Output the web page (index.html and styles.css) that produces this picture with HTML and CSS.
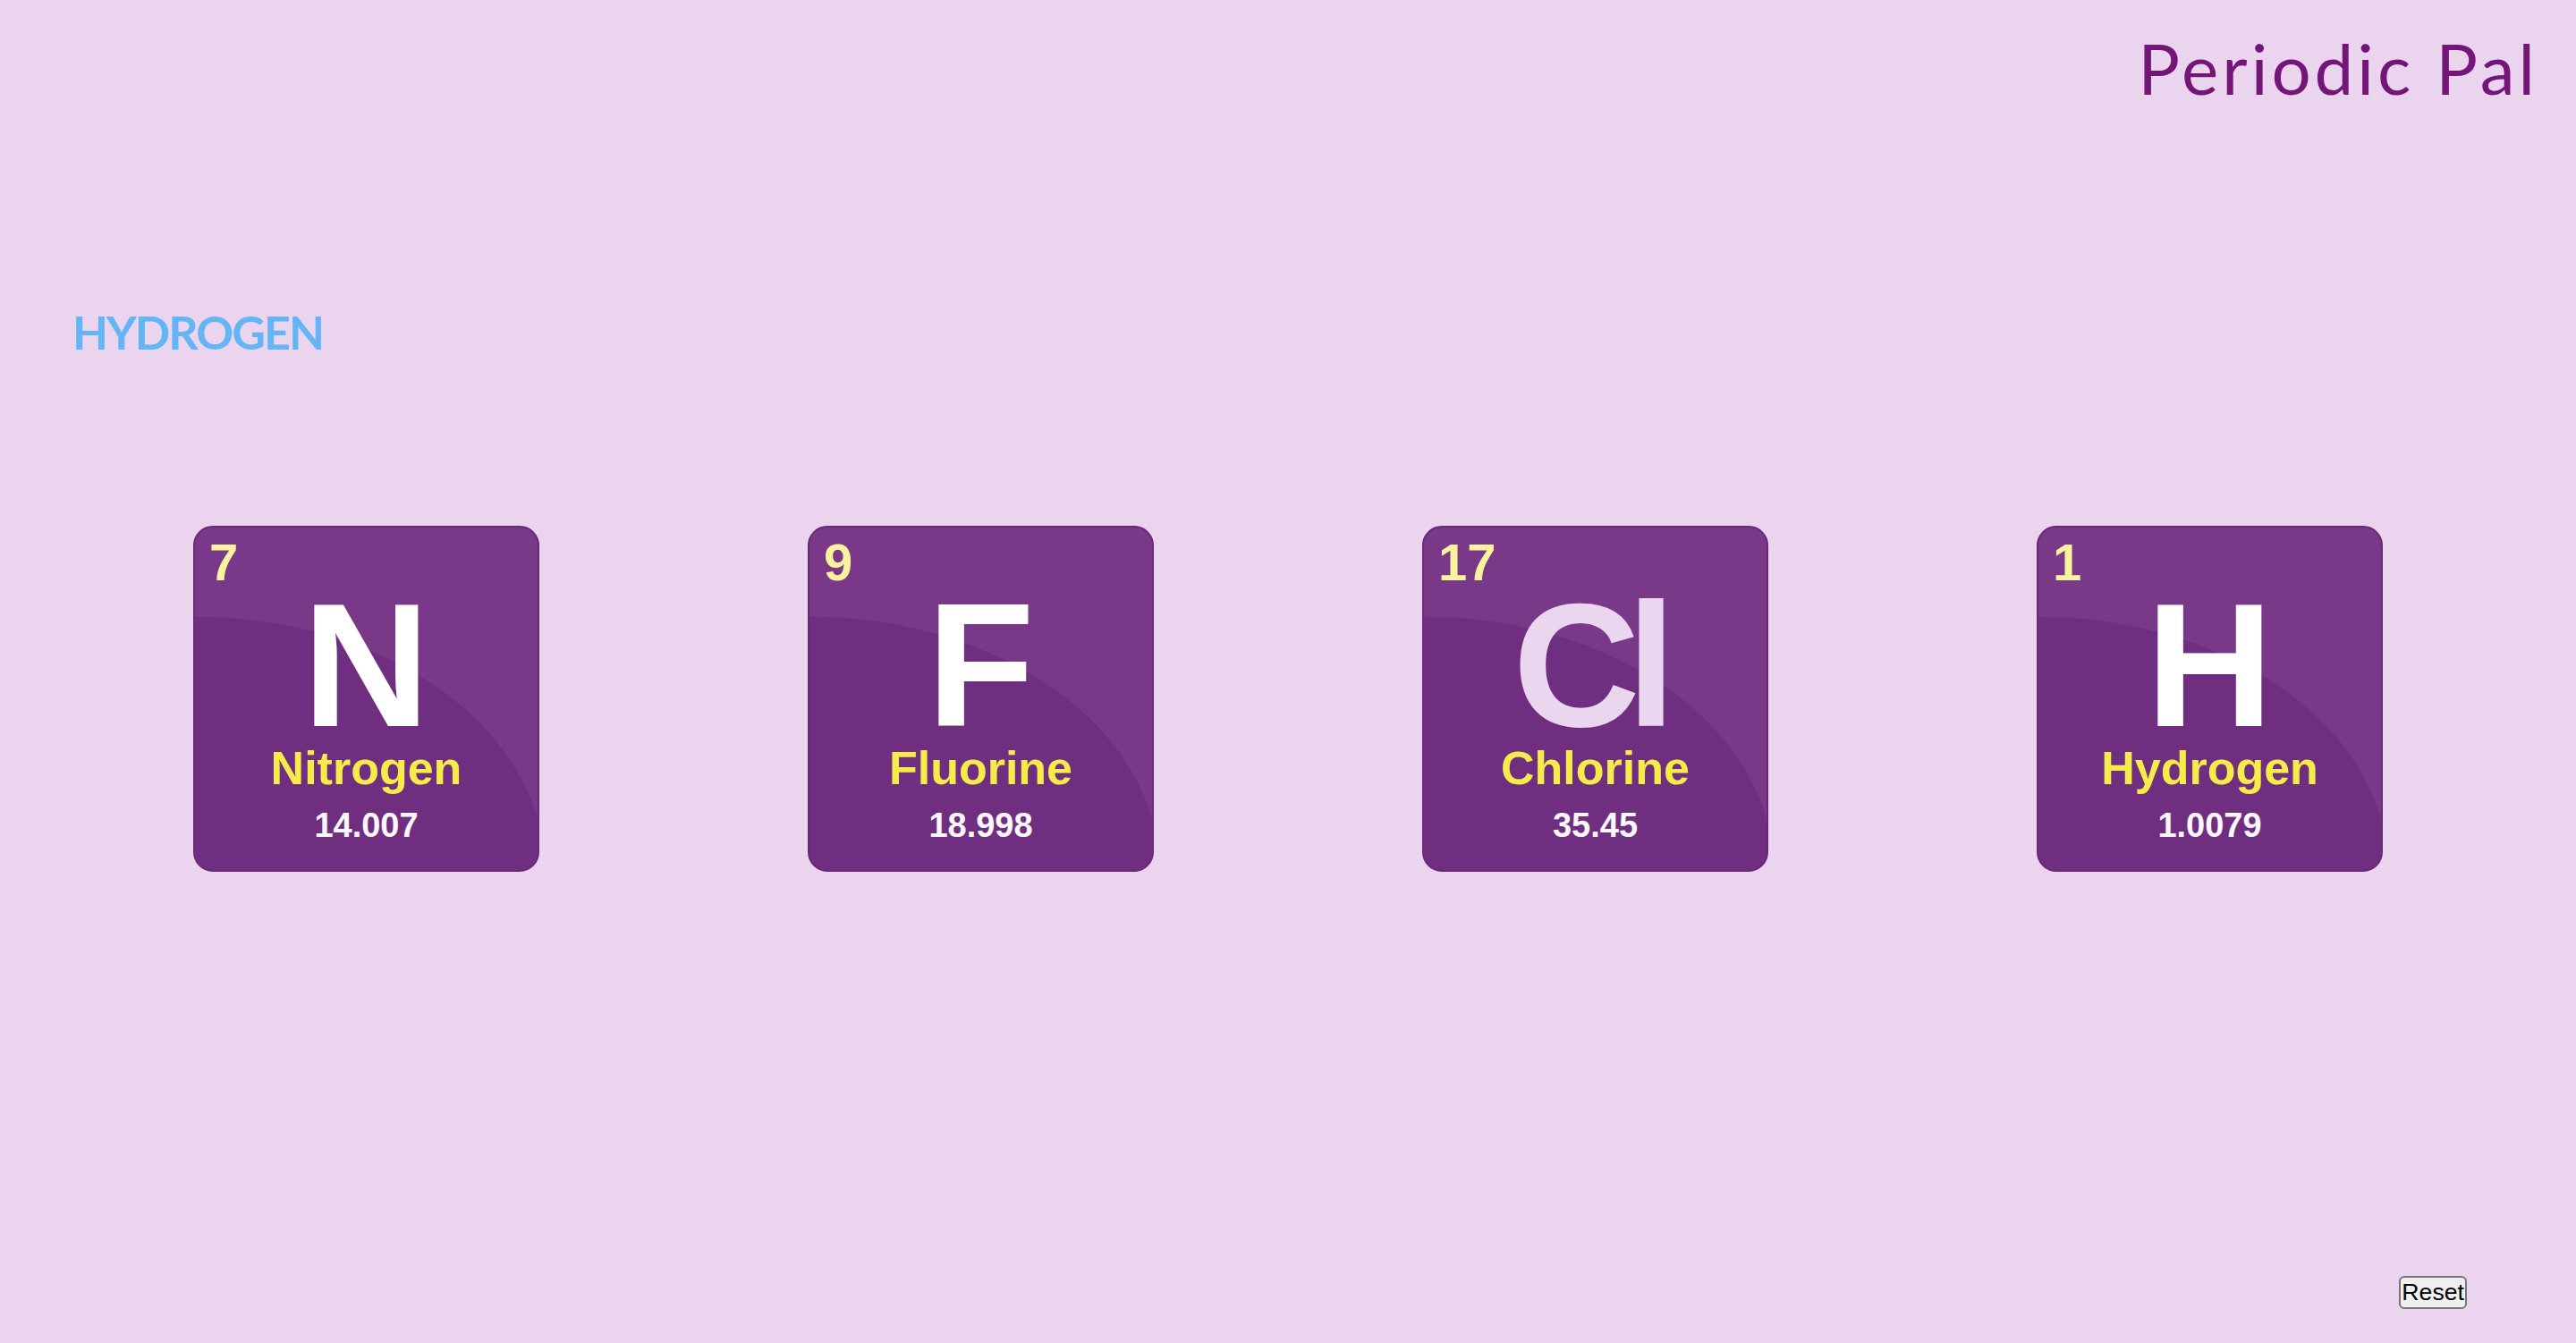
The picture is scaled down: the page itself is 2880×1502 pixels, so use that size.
FILE: index.html
```html
<!DOCTYPE html>
<html lang="en">
<head>
    <meta charset="UTF-8">
    <meta name="viewport" content="width=device-width, initial-scale=1.0">
    <title>Periodic Pal</title>
    <link rel="stylesheet" href="styles.css">
</head>
<body>

<header class="top-bar">
    <h1 class="app-title">Periodic Pal</h1>
</header>

<h2 class="target-name">HYDROGEN</h2>

<div class="element-row">
    <div class="element">
        <div class="element-number">7</div>
        <div class="element-symbol">N</div>
        <div class="element-name">Nitrogen</div>
        <div class="element-weight">14.007</div>
    </div>
    <div class="element">
        <div class="element-number">9</div>
        <div class="element-symbol">F</div>
        <div class="element-name">Fluorine</div>
        <div class="element-weight">18.998</div>
    </div>
    <div class="element">
        <div class="element-number">17</div>
        <div class="element-symbol faded">Cl</div>
        <div class="element-name">Chlorine</div>
        <div class="element-weight">35.45</div>
    </div>
    <div class="element">
        <div class="element-number">1</div>
        <div class="element-symbol">H</div>
        <div class="element-name">Hydrogen</div>
        <div class="element-weight">1.0079</div>
    </div>
</div>

<div class="controls">
    <button class="reset">Reset</button>
</div>

</body>
</html>
```

FILE: styles.css
```css
* {
    box-sizing: border-box;
    margin: 0;
    padding: 0;
}

body, html {
    height: 100%;
    overflow: hidden;
}

body {
    background: #ebd5ee;
    font-family: "Liberation Sans", Arial, sans-serif;
}

.top-bar {
    display: flex;
    justify-content: flex-end;
    padding: 30px 42px 0 0;
}

.app-title {
    font-family: Lato, sans-serif;
    font-weight: 400;
    font-size: 78px;
    line-height: 1.2;
    letter-spacing: 4px;
    color: #741578;
}

.target-name {
    margin-top: 216px;
    padding-left: 81px;
    font-family: Lato, sans-serif;
    font-weight: 700;
    font-size: 52px;
    line-height: 1.2;
    letter-spacing: -2px;
    color: #64b5f6;
}

.element-row {
    display: flex;
    justify-content: center;
    gap: 300px;
    margin-top: 186px;
}

/* one tile of the table */
.element {
    width: 387px;
    height: 387px;
    display: flex;
    flex-direction: column;
    align-items: center;
    padding-top: 18px;
    border: 2px solid #6a2878;
    border-radius: 22px;
    background: radial-gradient(392px 284px at 0 100%, #702e80 99.5%, #7a3888 100%);
    font-weight: 700;
}

.element-number {
    align-self: flex-start;
    padding-left: 16px;
    font-size: 58px;
    line-height: 0.74;
    color: #f8f39c;
}

.element-symbol {
    margin-top: 21px;
    font-size: 197px;
    line-height: 0.74;
    color: #ffffff;
}

.element-symbol.faded {
    color: #ead6ef;
    letter-spacing: -15px;
    padding-right: 17px;
}

.element-name {
    margin-top: 15px;
    font-size: 52px;
    line-height: 1;
    color: #f5ec4a;
}

.element-weight {
    margin-top: 19px;
    font-size: 38px;
    line-height: 1;
    color: #fbf8fc;
}

.controls {
    display: flex;
    justify-content: flex-end;
    margin-top: 452px;
    padding-right: 122px;
}

.reset {
    font-family: "Liberation Sans", Arial, sans-serif;
    font-size: 26.67px;
    color: #000;
    background: #efefef;
    border: 2px solid #767676;
    border-radius: 6px;
    padding: 1px 1px;
    cursor: pointer;
}
```
